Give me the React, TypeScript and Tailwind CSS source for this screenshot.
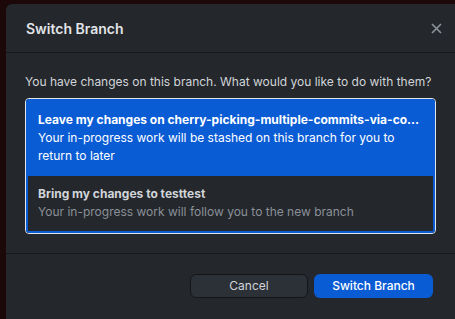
export default function App() {
  return (
    <div
      className="w-[455px] h-[319px] overflow-hidden bg-[#1c0809] pl-[6px] pt-[4px]"
      style={{ fontFamily: 'Inter, "Liberation Sans", sans-serif' }}
    >
      <div className="w-[460px] h-[330px] rounded-[6px] bg-[#24272b] flex flex-col">
        {/* header */}
        <div className="h-[49px] flex items-center justify-between pl-[20px] pr-[24px] border-b border-[#16181b]">
          <h1 className="text-[14px] font-semibold text-[#e1e4e8]">Switch Branch</h1>
          <svg width="11" height="11" viewBox="0 0 11 11" className="text-[#8b949e]">
            <path d="M1 1L10 10M10 1L1 10" stroke="currentColor" strokeWidth="1.6" />
          </svg>
        </div>

        {/* body */}
        <div className="pl-[19px] pr-[30px] pt-[21px] pb-[19px] border-b border-[#16181b]">
          <p className="text-[12px] leading-[16px] text-[#d1d5da] mb-[8px] whitespace-nowrap">
            You have changes on this branch. What would you like to do with them?
          </p>
          <div className="rounded-[4px] border border-[#e1e4e8] overflow-hidden">
            <div className="bg-[#0a5cd5] px-[12px] pt-[12px] pb-[11px] text-white text-[12px] leading-[18px]">
              <div className="font-bold truncate">
                Leave my changes on cherry-picking-multiple-commits-via-co…
              </div>
              <div>Your in-progress work will be stashed on this branch for you to return to later</div>
            </div>
            <div className="border-2 border-t-0 border-[#0a5cd5] rounded-b-[3px] bg-[#24272b] px-[10px] pt-[9px] pb-[10px] text-[12px] leading-[18px]">
              <div className="font-bold text-[#d1d5da]">Bring my changes to testtest</div>
              <div className="text-[#8a9099]">Your in-progress work will follow you to the new branch</div>
            </div>
          </div>
        </div>

        {/* footer */}
        <div className="flex justify-end gap-[6px] pt-[20px] pr-[33px]">
          <button className="w-[118px] h-[24px] rounded-[6px] bg-[#2c3037] border border-[#141619] text-[12px] text-[#d1d5da]">
            Cancel
          </button>
          <button className="w-[119px] h-[24px] rounded-[6px] bg-[#0a5cd5] text-[12px] font-medium text-white">
            Switch Branch
          </button>
        </div>
      </div>
    </div>
  );
}
